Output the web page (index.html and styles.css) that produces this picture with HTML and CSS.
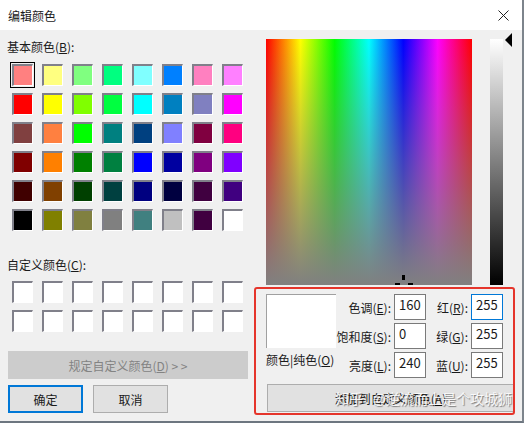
FILE: index.html
```html
<!DOCTYPE html>
<html lang="zh-CN">
<head>
    <meta charset="UTF-8">
    <title>编辑颜色</title>
    <link rel="stylesheet" href="styles.css">
</head>
<body>
    <div class="dialog">
        <div class="title-bar">
            <span>编辑颜色</span>
            <svg class="close-icon" width="11" height="11" viewBox="0 0 11 11">
                <path d="M0.5 0.5 L10.5 10.5 M10.5 0.5 L0.5 10.5" stroke="#222" stroke-width="1" fill="none"/>
            </svg>
        </div>
        <div class="main">
            <div class="left-col">
                <div class="group-label">基本颜色(<u>B</u>):</div>
                <div class="swatches basic">
                    <div class="swatch selected c-ff8080"></div>
                    <div class="swatch c-ffff80"></div>
                    <div class="swatch c-80ff80"></div>
                    <div class="swatch c-00ff80"></div>
                    <div class="swatch c-80ffff"></div>
                    <div class="swatch c-0080ff"></div>
                    <div class="swatch c-ff80c0"></div>
                    <div class="swatch c-ff80ff"></div>

                    <div class="swatch c-ff0000"></div>
                    <div class="swatch c-ffff00"></div>
                    <div class="swatch c-80ff00"></div>
                    <div class="swatch c-00ff40"></div>
                    <div class="swatch c-00ffff"></div>
                    <div class="swatch c-0080c0"></div>
                    <div class="swatch c-8080c0"></div>
                    <div class="swatch c-ff00ff"></div>

                    <div class="swatch c-804040"></div>
                    <div class="swatch c-ff8040"></div>
                    <div class="swatch c-00ff00"></div>
                    <div class="swatch c-008080"></div>
                    <div class="swatch c-004080"></div>
                    <div class="swatch c-8080ff"></div>
                    <div class="swatch c-800040"></div>
                    <div class="swatch c-ff0080"></div>

                    <div class="swatch c-800000"></div>
                    <div class="swatch c-ff8000"></div>
                    <div class="swatch c-008000"></div>
                    <div class="swatch c-008040"></div>
                    <div class="swatch c-0000ff"></div>
                    <div class="swatch c-0000a0"></div>
                    <div class="swatch c-800080"></div>
                    <div class="swatch c-8000ff"></div>

                    <div class="swatch c-400000"></div>
                    <div class="swatch c-804000"></div>
                    <div class="swatch c-004000"></div>
                    <div class="swatch c-004040"></div>
                    <div class="swatch c-000080"></div>
                    <div class="swatch c-000040"></div>
                    <div class="swatch c-400040"></div>
                    <div class="swatch c-400080"></div>

                    <div class="swatch c-000000"></div>
                    <div class="swatch c-808000"></div>
                    <div class="swatch c-808040"></div>
                    <div class="swatch c-808080"></div>
                    <div class="swatch c-408080"></div>
                    <div class="swatch c-c0c0c0"></div>
                    <div class="swatch c-400040"></div>
                    <div class="swatch c-ffffff"></div>
                </div>
                <div class="group-label custom-label">自定义颜色(<u>C</u>):</div>
                <div class="swatches custom">
                    <div class="swatch c-ffffff"></div>
                    <div class="swatch c-ffffff"></div>
                    <div class="swatch c-ffffff"></div>
                    <div class="swatch c-ffffff"></div>
                    <div class="swatch c-ffffff"></div>
                    <div class="swatch c-ffffff"></div>
                    <div class="swatch c-ffffff"></div>
                    <div class="swatch c-ffffff"></div>
                    <div class="swatch c-ffffff"></div>
                    <div class="swatch c-ffffff"></div>
                    <div class="swatch c-ffffff"></div>
                    <div class="swatch c-ffffff"></div>
                    <div class="swatch c-ffffff"></div>
                    <div class="swatch c-ffffff"></div>
                    <div class="swatch c-ffffff"></div>
                    <div class="swatch c-ffffff"></div>
                </div>
                <button class="button define-button" disabled>规定自定义颜色(<u>D</u>) &gt; &gt;</button>
                <div class="actions">
                    <button class="button default-button">确定</button>
                    <button class="button">取消</button>
                </div>
            </div>
            <div class="right-col">
                <div class="picker-row">
                    <div class="spectrum">
                        <span class="cross cross-top"></span>
                        <span class="cross cross-left"></span>
                        <span class="cross cross-right"></span>
                    </div>
                    <div class="lum-bar">
                        <span class="lum-arrow"></span>
                    </div>
                </div>
                <div class="color-panel">
                    <div class="panel-top">
                        <div class="preview-col">
                            <div class="preview"></div>
                            <div class="preview-label">颜色|纯色(<u>O</u>)</div>
                        </div>
                        <div class="fields">
                            <label class="field-label">色调(<u>E</u>):</label>
                            <div class="field">160</div>
                            <label class="field-label">红(<u>R</u>):</label>
                            <div class="field active">255</div>
                            <label class="field-label">饱和度(<u>S</u>):</label>
                            <div class="field">0</div>
                            <label class="field-label">绿(<u>G</u>):</label>
                            <div class="field">255</div>
                            <label class="field-label">亮度(<u>L</u>):</label>
                            <div class="field">240</div>
                            <label class="field-label">蓝(<u>U</u>):</label>
                            <div class="field">255</div>
                        </div>
                    </div>
                    <button class="button add-button">添加到自定义颜色(<u>A</u>)</button>
                    <span class="watermark">知乎 @逆流而上是个攻城狮</span>
                </div>
            </div>
        </div>
    </div>
</body>
</html>
```

FILE: styles.css
```css
/* Windows colour picker dialog */
body {
    margin: 0;
    width: 525px;
    height: 423px;
    overflow: hidden;
    background-color: #fff;
    font-family: 'Noto Sans CJK SC', 'Noto Sans', sans-serif;
    font-size: 12px;
    color: #1a1a1a;
}
.dialog {
    width: 522px;
    height: 421px;
    box-sizing: content-box;
    border-right: 2px solid #7d848c;
    border-bottom: 2px solid #6d7680;
    overflow: hidden;
}
.title-bar {
    height: 30px;
    display: flex;
    align-items: center;
    justify-content: space-between;
    padding: 0 8px;
    background-color: #fff;
}
.close-icon {
    margin-right: 5px;
}
.main {
    height: 391px;
    display: flex;
    background-color: #f0f0f0;
}
.left-col {
    width: 246px;
    padding: 9px 0 0 8px;
    flex-shrink: 0;
}
.group-label {
    height: 16px;
    line-height: 16px;
    margin-left: -1px;
}
.custom-label {
    margin-top: 26px;
}
.swatches {
    display: grid;
    grid-template-columns: repeat(8, 21px);
    grid-auto-rows: 22px;
    column-gap: 9px;
    row-gap: 7px;
    margin: 9px 0 0 4px;
}
.custom {
    margin-top: 8px;
}
.swatch {
    box-sizing: border-box;
    border-top: 2px solid #80808a;
    border-left: 2px solid #80808a;
    border-right: 1px solid #fff;
    border-bottom: 1px solid #fff;
}
.swatch.selected {
    outline: 1px solid #000;
    outline-offset: 1px;
}
.c-ff8080 { background-color: #ff8080; }
.c-ffff80 { background-color: #ffff80; }
.c-80ff80 { background-color: #80ff80; }
.c-00ff80 { background-color: #00ff80; }
.c-80ffff { background-color: #80ffff; }
.c-0080ff { background-color: #0080ff; }
.c-ff80c0 { background-color: #ff80c0; }
.c-ff80ff { background-color: #ff80ff; }
.c-ff0000 { background-color: #ff0000; }
.c-ffff00 { background-color: #ffff00; }
.c-80ff00 { background-color: #80ff00; }
.c-00ff40 { background-color: #00ff40; }
.c-00ffff { background-color: #00ffff; }
.c-0080c0 { background-color: #0080c0; }
.c-8080c0 { background-color: #8080c0; }
.c-ff00ff { background-color: #ff00ff; }
.c-804040 { background-color: #804040; }
.c-ff8040 { background-color: #ff8040; }
.c-00ff00 { background-color: #00ff00; }
.c-008080 { background-color: #008080; }
.c-004080 { background-color: #004080; }
.c-8080ff { background-color: #8080ff; }
.c-800040 { background-color: #800040; }
.c-ff0080 { background-color: #ff0080; }
.c-800000 { background-color: #800000; }
.c-ff8000 { background-color: #ff8000; }
.c-008000 { background-color: #008000; }
.c-008040 { background-color: #008040; }
.c-0000ff { background-color: #0000ff; }
.c-0000a0 { background-color: #0000a0; }
.c-800080 { background-color: #800080; }
.c-8000ff { background-color: #8000ff; }
.c-400000 { background-color: #400000; }
.c-804000 { background-color: #804000; }
.c-004000 { background-color: #004000; }
.c-004040 { background-color: #004040; }
.c-000080 { background-color: #000080; }
.c-000040 { background-color: #000040; }
.c-400040 { background-color: #400040; }
.c-400080 { background-color: #400080; }
.c-000000 { background-color: #000000; }
.c-808000 { background-color: #808000; }
.c-808040 { background-color: #808040; }
.c-808080 { background-color: #808080; }
.c-408080 { background-color: #408080; }
.c-c0c0c0 { background-color: #c0c0c0; }
.c-ffffff { background-color: #ffffff; }
.button {
    display: block;
    box-sizing: border-box;
    height: 28px;
    width: 75px;
    padding: 0;
    border: 1px solid #adadad;
    background-color: #e1e1e1;
    color: #1a1a1a;
    font-family: inherit;
    font-size: 12px;
}
.define-button {
    width: 240px;
    margin-top: 19px;
    background-color: #cccccc;
    border-color: #cccccc;
    color: #838383;
}
.actions {
    display: flex;
    gap: 10px;
    margin-top: 6px;
}
.default-button {
    border: 2px solid #0078d7;
}
.right-col {
    width: 268px;
    padding-top: 9px;
}
.picker-row {
    display: flex;
    padding-left: 12px;
}
.spectrum {
    position: relative;
    width: 206px;
    height: 246px;
    background:
        linear-gradient(to bottom, rgba(128, 128, 128, 0), #808080),
        linear-gradient(to right, #f00, #ff0, #0f0, #0ff, #00f, #f0f, #f00);
}
.cross {
    position: absolute;
    background-color: #000;
}
.cross-top {
    left: 136px;
    top: 236px;
    width: 3px;
    height: 5px;
}
.cross-left {
    left: 129px;
    top: 244px;
    width: 5px;
    height: 2px;
}
.cross-right {
    left: 142px;
    top: 244px;
    width: 5px;
    height: 2px;
}
.lum-bar {
    position: relative;
    width: 13px;
    height: 246px;
    margin-left: 18px;
    background: linear-gradient(to bottom, #fff, #000);
}
.lum-arrow {
    position: absolute;
    left: 15px;
    top: -6px;
    border-top: 7px solid transparent;
    border-bottom: 7px solid transparent;
    border-right: 7px solid #000;
}
.color-panel {
    position: relative;
    box-sizing: border-box;
    width: 261px;
    height: 128px;
    margin-top: 2px;
    padding: 5px 0 0 10px;
    border: 2px solid #e5352b;
    border-radius: 3px;
}
.panel-top {
    display: flex;
}
.preview-col {
    width: 70px;
}
.preview {
    box-sizing: border-box;
    height: 54px;
    background-color: #fff;
    border-top: 1px solid #a0a0a0;
    border-left: 1px solid #a0a0a0;
}
.preview-label {
    margin-top: 4px;
    height: 16px;
    line-height: 16px;
    white-space: nowrap;
}
.fields {
    display: grid;
    grid-template-columns: 58px 32px 45px 32px;
    grid-auto-rows: 26px;
    row-gap: 3px;
}
.field-label {
    display: flex;
    align-items: center;
    justify-content: flex-end;
    padding-right: 3px;
    white-space: nowrap;
}
.field {
    box-sizing: border-box;
    border: 1px solid #7a7a7a;
    background-color: #fff;
    padding-left: 4px;
    line-height: 20px;
    font-size: 13px;
}
.field.active {
    border-color: #0078d7;
}
.add-button {
    width: 246px;
    margin: 6px 0 0 1px;
    border-right: none;
    padding-right: 0;
}
.watermark {
    position: absolute;
    right: 1px;
    top: 99px;
    font-size: 14px;
    line-height: 20px;
    word-spacing: 6px;
    color: rgba(255, 255, 255, 0.9);
    text-shadow: 1px 1px 1px rgba(0, 0, 0, 0.45);
    white-space: nowrap;
}
```
